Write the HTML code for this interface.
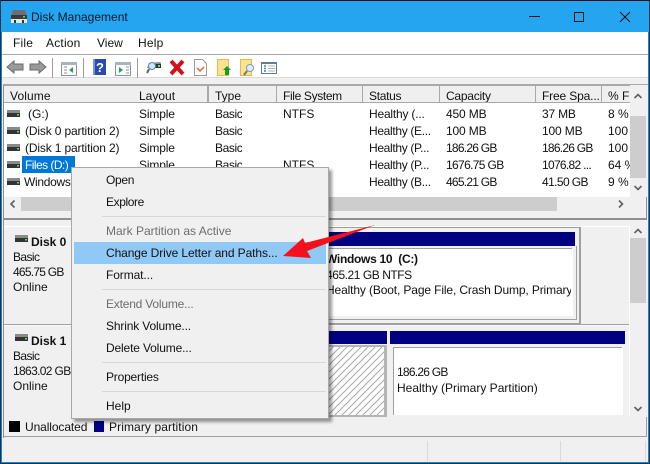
<!DOCTYPE html>
<html><head><meta charset="utf-8"><style>
html,body{margin:0;padding:0;background:#f0f0f0}
#w{position:relative;width:650px;height:464px;overflow:hidden;background:#f0f0f0;font:12px/15px "Liberation Sans",sans-serif;color:#111}
#w div{position:absolute}
.t{white-space:nowrap}
.h{top:85px;height:16px;background:#efefef;border-right:2px solid #a9a9a9;border-top:1px solid #a9a9a9;border-bottom:1px solid #a9a9a9;line-height:21px;padding-left:6px;white-space:nowrap;overflow:hidden}
.r{white-space:nowrap;overflow:hidden}
.m{left:106px;white-space:nowrap}
.g{color:#6d6d6d}
.s{left:102px;width:224px;height:1px;background:#d7d7d7}
svg{position:absolute;overflow:visible}
</style></head><body><div id="w">
<!-- frame -->
<div style="left:0;top:0;width:650px;height:464px;background:#1d84c9"></div>
<div style="left:0;top:0;width:650px;height:1px;background:#111"></div>
<div style="left:0;top:0;width:1px;height:464px;background:#10364f"></div>
<div style="left:649px;top:0;width:1px;height:464px;background:#10364f"></div>
<div style="left:0;top:463px;width:650px;height:1px;background:#10364f"></div>
<div style="left:2px;top:78px;width:646px;height:384px;background:#f0f0f0"></div>
<!-- title -->
<div style="left:1px;top:1px;width:648px;height:31px;background:#25a4f0"></div>
<svg style="left:10px;top:9px" width="18" height="16"><path d="M3 1h12l2 6H1z" fill="#6e6e6e"/><rect x="1" y="6" width="16" height="4" fill="#3a3a3a"/><rect x="13" y="7" width="2" height="1.500" fill="#5fe05f"/><rect x="1" y="10" width="16" height="4" fill="#e8e8e8"/><rect x="4" y="11" width="2" height="3" fill="#333"/><rect x="12" y="11" width="2" height="3" fill="#333"/></svg>
<div class="t" style="left:31px;top:10px;font-size:12px;color:#0a1a26">Disk Management</div>
<svg style="left:529px;top:11px" width="110" height="14"><path d="M0 5.500h11" stroke="#111" fill="none"/><rect x="45.500" y="1.500" width="9" height="9" stroke="#111" fill="none"/><path d="M91 1l10 10M101 1l-10 10" stroke="#111" fill="none"/></svg>
<!-- menu -->
<div style="left:2px;top:32px;width:646px;height:22px;background:#fff"></div>
<div style="left:2px;top:54px;width:646px;height:1px;background:#a9a9a9"></div>
<div class="t" style="left:13px;top:36px;letter-spacing:.2px">File</div>
<div class="t" style="left:46px;top:36px;letter-spacing:.2px">Action</div>
<div class="t" style="left:97px;top:36px">View</div>
<div class="t" style="left:138px;top:36px;letter-spacing:.2px">Help</div>
<!-- toolbar -->
<div style="left:2px;top:55px;width:646px;height:22px;background:#fff"></div>
<div style="left:2px;top:77px;width:646px;height:1px;background:#d9d9d9"></div>
<svg style="left:0;top:55px" width="290" height="24">
<path d="M7 12l7-6v3h9v6h-9v3z" fill="#9a9a9a" stroke="#6b6b6b"/>
<path d="M46 12l-7-6v3h-9v6h9v3z" fill="#9a9a9a" stroke="#6b6b6b"/>
<path d="M52.500 3v20M83.500 3v20M137.500 3v20" stroke="#9c9c9c"/>
<rect x="61.500" y="7.500" width="15" height="13" fill="#fff" stroke="#8a939b"/><rect x="61" y="7" width="16" height="3" fill="#a9b4bd"/><path d="M64 12h3M64 15h3M64 18h3" stroke="#8a939b"/><path d="M73 12v6l-4-3z" fill="#2aa052"/>
<rect x="93" y="4" width="13" height="16" fill="#2a4ab0"/><rect x="93" y="4" width="2" height="16" fill="#7c90d8"/><text x="96" y="17" font-family="Liberation Sans" font-weight="bold" font-size="13" fill="#fff">?</text>
<rect x="115.500" y="7.500" width="15" height="13" fill="#fff" stroke="#8a939b"/><rect x="115" y="7" width="16" height="3" fill="#a9b4bd"/><path d="M126 12h3M126 15h3M126 18h3" stroke="#8a939b"/><path d="M119 12v6l4-3z" fill="#2aa052"/>
<path d="M149 8l11-1 1 1v5h-14z" fill="#8c8c8c"/><rect x="152" y="9" width="9" height="4" fill="#333"/><rect x="158" y="10" width="2" height="2" fill="#5fe05f"/><circle cx="152" cy="11" r="3.500" fill="#cfe6f5" stroke="#5a8aa8"/><path d="M149 14l-2 4" stroke="#666" stroke-width="2"/>
<path d="M171 6l12 13M183 6l-12 13" stroke="#d1111a" stroke-width="4"/>
<path d="M194.500 4.500h8l4 4v12h-12z" fill="#fff" stroke="#9a9a9a"/><path d="M197 13l3 3 4-4" stroke="#e8642c" stroke-width="1.500" fill="none"/>
<rect x="217.500" y="4.500" width="11" height="16" fill="#fbe28f" stroke="#e0bc56"/><path d="M227 11l4 4h-2v5h-4v-5h-2z" fill="#14a01e"/>
<rect x="240.500" y="4.500" width="11" height="16" fill="#fbe28f" stroke="#e0bc56"/><circle cx="250" cy="13" r="3.500" fill="#dff0fb" stroke="#7a9bb5"/><path d="M247 16l-3 4" stroke="#777" stroke-width="2"/>
<rect x="261.500" y="7.500" width="15" height="11" fill="#fff" stroke="#6c7a86"/><rect x="261" y="7" width="16" height="2" fill="#6c7a86"/><path d="M264 11h2M264 13.500h2M264 16h2" stroke="#3a8ad0" stroke-width="1.500"/><path d="M268 11h7M268 13.500h7M268 16h7" stroke="#a9b0b6"/>
</svg>
<!-- header -->
<div style="left:3px;top:84px;width:645px;height:1px;background:#a9a9a9"></div>
<div style="left:3px;top:85px;width:1px;height:353px;background:#8f8f8f"></div>
<div class="h" style="left:4px;width:124px;letter-spacing:.1px">Volume</div>
<div class="h" style="left:133px;width:68px">Layout</div>
<div class="h" style="left:209px;width:61px">Type</div>
<div class="h" style="left:277px;width:79px;letter-spacing:-.35px">File System</div>
<div class="h" style="left:363px;width:70px;letter-spacing:-.3px">Status</div>
<div class="h" style="left:440px;width:89px;letter-spacing:-.25px">Capacity</div>
<div class="h" style="left:536px;width:59px;letter-spacing:-.15px">Free Spa...</div>
<div class="h" style="left:602px;width:24px">% Fr</div>
<!-- list -->
<div style="left:4px;top:103px;width:626px;height:94px;background:#fff"></div>
<div style="left:22px;top:156px;width:53px;height:17px;background:#0078d7"></div>
<svg style="left:7px;top:108px" width="14" height="80">
<g><rect y="2" width="13" height="3" fill="#8a8a8a"/><rect y="5" width="13" height="4" fill="#333"/><rect x="10" y="6" width="2" height="1.500" fill="#5fe05f"/></g>
<g transform="translate(0,17)"><rect y="2" width="13" height="3" fill="#8a8a8a"/><rect y="5" width="13" height="4" fill="#333"/><rect x="10" y="6" width="2" height="1.500" fill="#5fe05f"/></g>
<g transform="translate(0,34)"><rect y="2" width="13" height="3" fill="#8a8a8a"/><rect y="5" width="13" height="4" fill="#333"/><rect x="10" y="6" width="2" height="1.500" fill="#5fe05f"/></g>
<g transform="translate(0,51)"><rect y="2" width="13" height="3" fill="#8a8a8a"/><rect y="5" width="13" height="4" fill="#333"/><rect x="10" y="6" width="2" height="1.500" fill="#5fe05f"/></g>
<g transform="translate(0,68)"><rect y="2" width="13" height="3" fill="#8a8a8a"/><rect y="5" width="13" height="4" fill="#333"/><rect x="10" y="6" width="2" height="1.500" fill="#5fe05f"/></g>
</svg>
<div class="r" style="left:28px;top:107px">(G:)</div>
<div class="r" style="left:25px;top:124px;letter-spacing:-.15px">(Disk 0 partition 2)</div>
<div class="r" style="left:25px;top:141px;letter-spacing:-.15px">(Disk 1 partition 2)</div>
<div class="r" style="left:25px;top:158px;color:#fff;letter-spacing:-.55px">Files (D:)</div>
<div class="r" style="left:24px;top:175px;letter-spacing:-.3px">Windows 10 (C:)</div>
<div class="r" style="left:139px;top:107px;letter-spacing:-.15px">Simple</div><div class="r" style="left:139px;top:124px;letter-spacing:-.15px">Simple</div><div class="r" style="left:139px;top:141px;letter-spacing:-.15px">Simple</div><div class="r" style="left:139px;top:158px;letter-spacing:-.15px">Simple</div><div class="r" style="left:139px;top:175px;letter-spacing:-.15px">Simple</div>
<div class="r" style="left:215px;top:107px;letter-spacing:-.4px">Basic</div><div class="r" style="left:215px;top:124px;letter-spacing:-.4px">Basic</div><div class="r" style="left:215px;top:141px;letter-spacing:-.4px">Basic</div><div class="r" style="left:215px;top:158px;letter-spacing:-.4px">Basic</div><div class="r" style="left:215px;top:175px;letter-spacing:-.4px">Basic</div>
<div class="r" style="left:283px;top:107px">NTFS</div><div class="r" style="left:283px;top:158px">NTFS</div><div class="r" style="left:283px;top:175px">NTFS</div>
<div class="r" style="left:369px;top:107px;letter-spacing:-.2px">Healthy (...</div><div class="r" style="left:369px;top:124px;letter-spacing:-.33px">Healthy (E...</div><div class="r" style="left:369px;top:141px;letter-spacing:-.33px">Healthy (P...</div><div class="r" style="left:369px;top:158px;letter-spacing:-.33px">Healthy (P...</div><div class="r" style="left:369px;top:175px;letter-spacing:-.33px">Healthy (B...</div>
<div class="r" style="left:446px;top:107px;letter-spacing:-.15px">450 MB</div><div class="r" style="left:446px;top:124px;letter-spacing:-.15px">100 MB</div><div class="r" style="left:446px;top:141px;letter-spacing:-.75px">186.26 GB</div><div class="r" style="left:446px;top:158px;letter-spacing:-.65px">1676.75 GB</div><div class="r" style="left:446px;top:175px;letter-spacing:-.75px">465.21 GB</div>
<div class="r" style="left:542px;top:107px;letter-spacing:-.2px">37 MB</div><div class="r" style="left:542px;top:124px;letter-spacing:-.15px">100 MB</div><div class="r" style="left:542px;top:141px;letter-spacing:-.75px">186.26 GB</div><div class="r" style="left:542px;top:158px;letter-spacing:-.7px">1076.82 ...</div><div class="r" style="left:542px;top:175px;letter-spacing:-.6px">41.50 GB</div>
<div class="r" style="left:608px;top:107px;width:22px">8 %</div><div class="r" style="left:608px;top:124px;width:22px">100</div><div class="r" style="left:608px;top:141px;width:22px">100</div><div class="r" style="left:608px;top:158px;width:22px">64 %</div><div class="r" style="left:608px;top:175px;width:22px">9 %</div>
<!-- scrollbars upper -->
<div style="left:630px;top:85px;width:16px;height:112px;background:#f0f0f0"></div>
<div style="left:630px;top:116px;width:16px;height:62px;background:#cdcdcd"></div>
<div style="left:4px;top:197px;width:642px;height:14px;background:#f0f0f0"></div>
<div style="left:21px;top:197px;width:536px;height:14px;background:#cdcdcd"></div>
<!-- splitter -->
<div style="left:3px;top:218px;width:644px;height:2px;background:#8f8f8f"></div>
<div style="left:646px;top:197px;width:1px;height:22px;background:#8f8f8f"></div>
<!-- lower pane -->
<div style="left:4px;top:226px;width:626px;height:1px;background:#fff"></div>
<div style="left:4px;top:324px;width:626px;height:1px;background:#a0a0a0"></div>
<div style="left:4px;top:325px;width:626px;height:1px;background:#fbfbfb"></div>
<div style="left:629px;top:226px;width:1px;height:191px;background:#fff"></div>
<div style="left:630px;top:238px;width:16px;height:65px;background:#cdcdcd"></div>
<svg style="left:0;top:0" width="650" height="464">
<path d="M634.500 98l3.500-3.500 3.500 3.500M634.500 186l3.500 3.500 3.500-3.500M634.500 233l3.500-3.500 3.500 3.500M634.500 407l3.500 3.500 3.500-3.500" stroke="#606060" stroke-width="1.600" fill="none"/>
<path d="M14.500 200.500l-3.500 3.500 3.500 3.500M619 200.500l3.500 3.500-3.500 3.500" stroke="#606060" stroke-width="1.600" fill="none"/>
</svg>
<svg style="left:15px;top:233px" width="14" height="120">
<rect y="2" width="13" height="3" fill="#8a8a8a"/><rect y="5" width="13" height="4" fill="#333"/><rect x="10" y="6" width="2" height="1.500" fill="#5fe05f"/>
<g transform="translate(0,99)"><rect y="2" width="13" height="3" fill="#8a8a8a"/><rect y="5" width="13" height="4" fill="#333"/><rect x="10" y="6" width="2" height="1.500" fill="#5fe05f"/></g>
</svg>
<div class="t" style="left:31px;top:235px;font-weight:bold">Disk 0</div>
<div class="t" style="left:13px;top:250px;letter-spacing:-.6px">Basic</div>
<div class="t" style="left:13px;top:265px;letter-spacing:-.75px">465.75 GB</div>
<div class="t" style="left:13px;top:280px">Online</div>
<div class="t" style="left:31px;top:334px;font-weight:bold">Disk 1</div>
<div class="t" style="left:13px;top:349px;letter-spacing:-.6px">Basic</div>
<div class="t" style="left:13px;top:364px;letter-spacing:-.65px">1863.02 GB</div>
<div class="t" style="left:13px;top:379px">Online</div>
<!-- disk 0 partition -->
<div style="left:300px;top:227px;width:279px;height:95px;border:solid #a0a0a0;border-width:1px 2px 1px 0;background:#f0f0f0"></div>
<div style="left:300px;top:232px;width:275px;height:14px;background:#000080"></div>
<div style="left:300px;top:246px;width:276px;height:73px;border:solid #a0a0a0;border-width:0 1px 1px 0;background:#f0f0f0"></div>
<div style="left:300px;top:248px;width:272px;height:1px;background:#a0a0a0"></div>
<div style="left:300px;top:249px;width:273px;height:67px;background:#fff"></div>
<div class="t" style="left:326px;top:252px;font-weight:bold;letter-spacing:-.3px">Windows 10&nbsp; (C:)</div>
<div class="t" style="left:326px;top:268px;letter-spacing:-.45px">465.21 GB NTFS</div>
<div class="t" style="left:326px;top:283px;letter-spacing:-.13px;width:245px;overflow:hidden">Healthy (Boot, Page File, Crash Dump, Primary</div>
<!-- disk 1 partitions -->
<div style="left:300px;top:331px;width:87px;height:13px;background:#000080"></div>
<div style="left:390px;top:331px;width:235px;height:13px;background:#000080"></div>
<svg style="left:300px;top:345px" width="88" height="72"><defs><pattern id="p" width="7" height="7" patternUnits="userSpaceOnUse"><path d="M-1 8L8-1M-1 1L1-1M6 8l2-2" stroke="#a8a8a8" fill="none"/></pattern></defs><rect width="87" height="72" fill="#b4b4b4"/><rect x="0" y="2" width="84" height="68" fill="#fff"/><rect x="0" y="2" width="84" height="68" fill="url(#p)"/></svg>
<div style="left:393px;top:347px;width:229px;height:1px;background:#a0a0a0"></div>
<div style="left:393px;top:347px;width:1px;height:68px;background:#a0a0a0"></div>
<div style="left:394px;top:348px;width:229px;height:67px;background:#fff"></div>
<div class="t" style="left:397px;top:365px;letter-spacing:-.75px">186.26 GB</div>
<div class="t" style="left:397px;top:381px">Healthy (Primary Partition)</div>
<!-- legend -->
<div style="left:4px;top:417px;width:642px;height:19px;background:#f0f0f0;border-bottom:1px solid #a0a0a0"></div>
<div style="left:9px;top:421px;width:11px;height:11px;background:#000"></div>
<div class="t" style="left:25px;top:420px;letter-spacing:-.1px">Unallocated</div>
<div style="left:94px;top:421px;width:10px;height:11px;background:#000080"></div>
<div class="t" style="left:109px;top:420px;letter-spacing:.1px">Primary partition</div>
<div style="left:646px;top:417px;width:1px;height:20px;background:#a0a0a0"></div>
<!-- status -->
<div style="left:427px;top:441px;width:1px;height:20px;background:#d9d9d9"></div>
<div style="left:560px;top:441px;width:1px;height:20px;background:#d9d9d9"></div>
<div style="left:645px;top:441px;width:1px;height:20px;background:#d9d9d9"></div>
<!-- context menu -->
<div style="left:71px;top:167px;width:256px;height:250px;background:#f0f0f0;border:1px solid #a8a8a8;box-shadow:3px 3px 3px rgba(0,0,0,.4)"></div>
<div style="left:74px;top:242px;width:252px;height:22px;background:#90c8f6"></div>
<div class="m" style="top:173px;letter-spacing:-.3px">Open</div>
<div class="m" style="top:195px;letter-spacing:-.4px">Explore</div>
<div class="s" style="top:216px"></div>
<div class="m g" style="top:224px">Mark Partition as Active</div>
<div class="m" style="top:246px;letter-spacing:-.1px">Change Drive Letter and Paths...</div>
<div class="m" style="top:268px;letter-spacing:-.1px">Format...</div>
<div class="s" style="top:289px"></div>
<div class="m g" style="top:297px;letter-spacing:-.2px">Extend Volume...</div>
<div class="m" style="top:319px;letter-spacing:-.15px">Shrink Volume...</div>
<div class="m" style="top:341px;letter-spacing:-.15px">Delete Volume...</div>
<div class="s" style="top:362px"></div>
<div class="m" style="top:370px;letter-spacing:-.2px">Properties</div>
<div class="s" style="top:391px"></div>
<div class="m" style="top:399px">Help</div>
<!-- arrow -->
<svg style="left:0;top:0" width="650" height="464"><path d="M283 256L303 238L305 243L375 225L307 251L311 258Z" fill="#f3121c"/></svg>
</div></body></html>
